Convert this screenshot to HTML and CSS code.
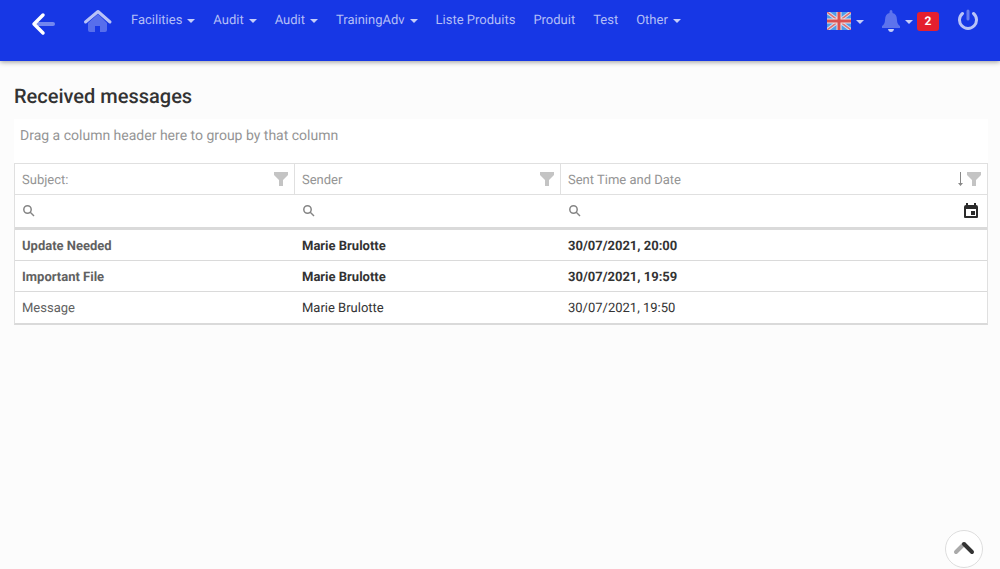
FILE: index.html
```html
<!DOCTYPE html>
<html lang="en">
<head>
    <meta charset="utf-8">
    <title>Received messages</title>
    <link rel="stylesheet" href="styles.css">
</head>
<body>
    <!-- Top bar -->
    <header class="topbar">
        <a class="back" href="#" aria-label="Back">
            <svg width="24" height="24" viewBox="0 0 24 24" fill="none" stroke="#fff" stroke-linecap="round">
                <path d="M7 12H22" stroke-width="4" opacity=".4"/>
                <path d="M12 3L3 12L12 21" stroke-width="3.500" stroke-linejoin="round"/>
            </svg>
        </a>
        <nav class="menu">
            <a class="home" href="#" aria-label="Home">
                <svg width="30" height="24" viewBox="0 0 30 24" fill="#fff">
                    <path d="M15 6L5 15V22Q5 24 7 24H12V18H17V24H22Q24 24 24 22V15Z" opacity=".28"/>
                    <path d="M2.500 14L15 3.500L27 14" fill="none" stroke="#fff" stroke-width="3" stroke-linecap="round" stroke-linejoin="round" opacity=".7"/>
                </svg>
            </a>
            <button class="menu-item caret">Facilities</button>
            <button class="menu-item caret">Audit</button>
            <button class="menu-item caret">Audit</button>
            <button class="menu-item caret">TrainingAdv</button>
            <a class="menu-item" href="#">Liste Produits</a>
            <a class="menu-item" href="#">Produit</a>
            <a class="menu-item" href="#">Test</a>
            <button class="menu-item caret">Other</button>
        </nav>
        <div class="tools">
            <button class="tool caret" aria-label="Language">
                <svg width="24" height="18" viewBox="0 0 24 18">
                    <rect width="24" height="18" fill="#4d9be8"/>
                    <path d="M0 0L24 18M24 0L0 18" stroke="#d5dcee" stroke-width="3.500"/>
                    <path d="M0 0L24 18M24 0L0 18" stroke="#e07070" stroke-width="1.500"/>
                    <path d="M12 0V18M0 9H24" stroke="#f0dfe2" stroke-width="5"/>
                    <path d="M12 0V18M0 9H24" stroke="#d95050" stroke-width="3"/>
                </svg>
            </button>
            <button class="tool caret" aria-label="Notifications">
                <svg width="18" height="22" viewBox="0 0 18 22" fill="#fff">
                    <path d="M9 0Q10.500 0 10.500 2V3Q15 4 15 10Q15 14 18 16V18H0V16Q3 14 3 10Q3 4 7.500 3V2Q7.500 0 9 0Z" opacity=".3"/>
                    <path d="M6 19H12Q11.500 22 9 22Q6.500 22 6 19Z" opacity=".75"/>
                </svg>
            </button>
            <span class="badge">2</span>
            <a class="power" href="#" aria-label="Log out">
                <svg width="20" height="24" viewBox="0 0 20 24" fill="none" stroke="#fff" stroke-width="3" stroke-linecap="round">
                    <path d="M4.500 4.500A8.500 8.500 0 1 0 15.500 4.500" opacity=".7"/>
                    <path d="M10 2V10" opacity=".35"/>
                </svg>
            </a>
        </div>
    </header>

    <main class="content">
        <h1>Received messages</h1>
        <div class="group-panel">Drag a column header here to group by that column</div>

        <table class="grid">
            <colgroup>
                <col class="col-subject">
                <col class="col-sender">
                <col>
            </colgroup>
            <thead>
                <tr class="grid-header">
                    <th>
                        <div class="head-cell">
                            <span>Subject:</span>
                            <button class="filter" aria-label="Filter subject"><svg width="14" height="14" viewBox="0 0 14 14"><path d="M0 0H14V3L9 8V14H5V8L0 3Z"/></svg></button>
                        </div>
                    </th>
                    <th>
                        <div class="head-cell">
                            <span>Sender</span>
                            <button class="filter" aria-label="Filter sender"><svg width="14" height="14" viewBox="0 0 14 14"><path d="M0 0H14V3L9 8V14H5V8L0 3Z"/></svg></button>
                        </div>
                    </th>
                    <th aria-sort="descending">
                        <div class="head-cell">
                            <span>Sent Time and Date</span>
                            <svg class="sort" width="5" height="14" viewBox="0 0 5 14"><path d="M2 0H3V11H5L2.500 14L0 11H2Z"/></svg>
                            <button class="filter" aria-label="Filter date"><svg width="14" height="14" viewBox="0 0 14 14"><path d="M0 0H14V3L9 8V14H5V8L0 3Z"/></svg></button>
                        </div>
                    </th>
                </tr>
                <tr class="grid-search">
                    <td>
                        <label class="search-cell">
                            <svg width="13" height="12" viewBox="-1 0 13 12"><circle cx="4.500" cy="4.500" r="3.700"/><path d="M7 7L11 11"/></svg>
                            <input type="text" aria-label="Search subject">
                        </label>
                    </td>
                    <td>
                        <label class="search-cell">
                            <svg width="13" height="12" viewBox="-1 0 13 12"><circle cx="4.500" cy="4.500" r="3.700"/><path d="M7 7L11 11"/></svg>
                            <input type="text" aria-label="Search sender">
                        </label>
                    </td>
                    <td>
                        <div class="date-cell">
                            <label class="search-cell">
                                <svg width="13" height="12" viewBox="-1 0 13 12"><circle cx="4.500" cy="4.500" r="3.700"/><path d="M7 7L11 11"/></svg>
                                <input type="text" aria-label="Search date">
                            </label>
                            <button class="calendar" aria-label="Pick a date">
                                <svg width="14" height="16" viewBox="0 0 14 16"><path fill-rule="evenodd" d="M2 0H4V2H10V0H12V2Q14 2 14 4V14Q14 15 13 15H1Q0 15 0 14V4Q0 2 2 2ZM2 6V13H12V6Z"/><path d="M7 8H11V12H7Z"/></svg>
                            </button>
                        </div>
                    </td>
                </tr>
            </thead>
            <tbody>
                <tr class="unread">
                    <td><a href="#">Update Needed</a></td>
                    <td>Marie Brulotte</td>
                    <td>30/07/2021, 20:00</td>
                </tr>
                <tr class="unread">
                    <td><a href="#">Important File</a></td>
                    <td>Marie Brulotte</td>
                    <td>30/07/2021, 19:59</td>
                </tr>
                <tr>
                    <td><a href="#">Message</a></td>
                    <td>Marie Brulotte</td>
                    <td>30/07/2021, 19:50</td>
                </tr>
            </tbody>
        </table>
    </main>

    <!-- Scroll to top -->
    <button class="scroll-top" aria-label="Scroll to top">
        <svg width="22" height="16" viewBox="0 0 22 16" fill="none" stroke-width="4" stroke-linecap="round">
            <path d="M3 11L11 3" stroke="#aaa"/>
            <path d="M11 3L19 11" stroke="#333"/>
        </svg>
    </button>
</body>
</html>
```
FILE: styles.css
```css
* {
    box-sizing: border-box;
}
body {
    margin: 0;
    background-color: #fcfcfc;
    color: #333;
    font-family: Roboto, sans-serif;
    font-size: 13px;
    text-rendering: geometricPrecision;
}
a {
    color: inherit;
    text-decoration: none;
}
button {
    padding: 0;
    border: none;
    background: none;
    color: inherit;
    font: inherit;
    text-rendering: inherit;
    cursor: pointer;
}
svg {
    display: block;
}

/* Top bar */
.topbar {
    display: flex;
    align-items: flex-start;
    height: 61px;
    padding: 0 22px 0 31px;
    background-color: #1737e5;
    color: #b3bef7;
    box-shadow: 0 1px 5px rgba(0, 0, 0, 0.4);
}
.back {
    margin: 12px 28px 0 0;
}
.menu {
    display: flex;
    align-items: center;
    flex: 1;
    gap: 18px;
    height: 40px;
}
.caret {
    display: flex;
    align-items: center;
    gap: 5px;
}
.caret::after {
    content: "";
    margin-top: 2px;
    border: 4px solid transparent;
    border-top-color: #c5cdf9;
    border-bottom: none;
}
.tools {
    display: flex;
    align-items: center;
    height: 42px;
}
.tool {
    margin-right: 18px;
}
.tool + .badge {
    margin-left: -14px;
}
.badge {
    width: 22px;
    border-radius: 3px;
    background-color: #e4202f;
    color: #fff;
    font-size: 12px;
    font-weight: bold;
    line-height: 19px;
    text-align: center;
}
.power {
    margin-left: 19px;
}

/* Messages */
.content {
    padding: 23px 12px 0 14px;
}
h1 {
    margin: 0;
    font-size: 20px;
    font-weight: 500;
    line-height: 24px;
}
.group-panel {
    height: 44px;
    margin-top: 11px;
    padding: 0 6px;
    background-color: #fff;
    color: #959595;
    font-size: 14px;
    line-height: 34px;
}
.grid {
    width: 100%;
    table-layout: fixed;
    border: 1px solid #e0e0e0;
    border-bottom: 2px solid #dadada;
    border-spacing: 0;
    background-color: #fff;
}
.col-subject {
    width: 280px;
}
.col-sender {
    width: 266px;
}
.grid th,
.grid td {
    padding: 0 6px 0 7px;
    text-align: left;
}
.grid-header th {
    height: 31px;
    border-bottom: 1px solid #e0e0e0;
    color: #959595;
    font-weight: normal;
}
.grid-header th:not(:last-child) {
    border-right: 1px solid #e0e0e0;
}
.head-cell {
    display: flex;
    align-items: center;
    gap: 4px;
}
.head-cell span {
    flex: 1;
    padding-top: 2px;
}
.filter {
    fill: #c4c4c4;
}
.sort {
    fill: #888;
}
.grid-search td {
    height: 35px;
    border-bottom: 3px solid #dadada;
}
.search-cell {
    display: flex;
    align-items: center;
    flex: 1;
    gap: 6px;
    fill: none;
    stroke: #858585;
    stroke-width: 1.5;
}
.search-cell input {
    flex: 1;
    min-width: 0;
    padding: 0;
    border: none;
    outline: none;
    background: none;
    font: inherit;
}
.date-cell {
    display: flex;
    align-items: center;
}
.calendar {
    margin-right: 3px;
    fill: #2b2b2b;
}
.grid tbody td {
    height: 31px;
    padding-top: 2px;
    border-bottom: 1px solid #dadada;
}
.grid tbody tr:last-child td {
    border-bottom: none;
}
.grid tbody a {
    color: #616161;
}
.unread {
    font-weight: bold;
}

.scroll-top {
    position: fixed;
    right: 17px;
    bottom: 1px;
    display: flex;
    align-items: center;
    justify-content: center;
    width: 38px;
    height: 38px;
    border: 1px solid #ddd;
    border-radius: 50%;
    background-color: #fff;
}
```
